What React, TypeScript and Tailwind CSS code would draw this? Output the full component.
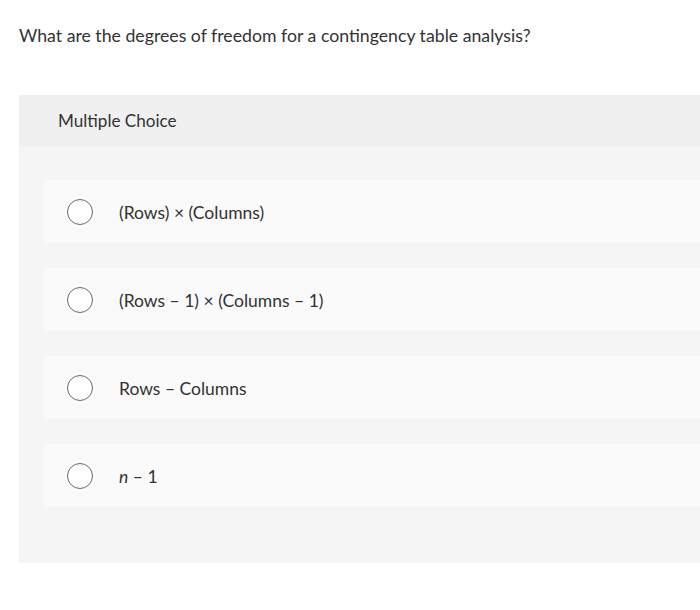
const options: { key: string; label: React.ReactNode }[] = [
  { key: 'a', label: '(Rows) × (Columns)' },
  { key: 'b', label: '(Rows – 1) × (Columns – 1)' },
  { key: 'c', label: 'Rows – Columns' },
  {
    key: 'd',
    label: (
      <>
        <span className="italic">n</span> – 1
      </>
    ),
  },
]

export default function App() {
  return (
    <div className="min-h-[610px] w-[700px] bg-white font-['Lato',sans-serif] text-[#333]">
      <div className="px-[19px] pt-[24px] text-[17.7px] leading-[24px]">
        What are the degrees of freedom for a contingency table analysis?
      </div>

      <div className="ml-[19px] mt-[47px] bg-[#f5f5f5] pb-[56px]">
        <div className="flex h-[51px] items-center bg-[#f0f0f0] pl-[39px] pt-[1px] text-[17.1px]">Multiple Choice</div>

        <div className="flex flex-col gap-[25px] pl-[24px] pt-[34px]">
          {options.map((o) => (
            <label key={o.key} className="flex h-[63px] cursor-pointer items-center bg-[#fafafa]">
              <span className="ml-[24px] h-[26px] w-[26px] shrink-0 rounded-full border-[1.5px] border-[#5f6e7c] bg-white" />
              <span className="ml-[26px] mt-[3px] text-[17.5px]">{o.label}</span>
            </label>
          ))}
        </div>
      </div>
    </div>
  )
}
